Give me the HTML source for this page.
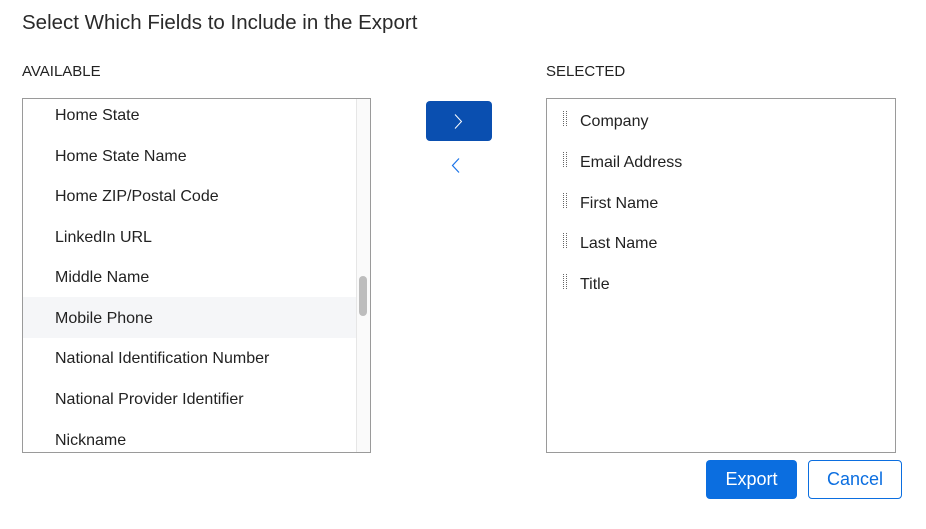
<!DOCTYPE html>
<html><head><style>
body{margin:0;width:926px;height:529px;background:#fff;font-family:"Liberation Sans",sans-serif;color:#222;position:relative;overflow:hidden}
.a{position:absolute}
.t{left:22px;top:11px;font-size:20.5px;color:#2a2a2a}
.lbl{font-size:15px;color:#222}
.box{border:1px solid #9a9a9a;box-sizing:border-box}
.it{position:absolute;font-size:16px;line-height:20px;color:#222}
.btn{border-radius:4px;font-size:18px;text-align:center;box-sizing:border-box}
</style></head><body>
<div class="a t">Select Which Fields to Include in the Export</div>
<div class="a lbl" style="left:22px;top:63px">AVAILABLE</div>
<div class="a lbl" style="left:546px;top:63px">SELECTED</div>
<div class="a box" style="left:22px;top:98px;width:349px;height:355px;overflow:hidden">
 <div class="a" style="left:0;top:198px;width:333px;height:41px;background:#f5f6f8"></div>
 <div class="a" style="left:333px;top:0;width:15px;height:355px;background:#fafafa;border-left:1px solid #e6e6e6"></div>
 <div class="a" style="left:336px;top:177px;width:8px;height:40px;border-radius:4px;background:#bdbdbd"></div>
 <div class="it" style="left:32px;top:7px">Home State</div>
 <div class="it" style="left:32px;top:48px">Home State Name</div>
 <div class="it" style="left:32px;top:88px">Home ZIP/Postal Code</div>
 <div class="it" style="left:32px;top:129px">LinkedIn URL</div>
 <div class="it" style="left:32px;top:169px">Middle Name</div>
 <div class="it" style="left:32px;top:210px">Mobile Phone</div>
 <div class="it" style="left:32px;top:250px">National Identification Number</div>
 <div class="it" style="left:32px;top:291px">National Provider Identifier</div>
 <div class="it" style="left:32px;top:332px">Nickname</div>
</div>
<div class="a" style="left:426px;top:101px;width:66px;height:40px;border-radius:4px;background:#0a4fb0"></div>
<svg class="a" style="left:453px;top:113px" width="12" height="18"><path d="M2 1.5l6.5 7-6.5 7" fill="none" stroke="#fff" stroke-width="1"/></svg>
<svg class="a" style="left:450px;top:157px" width="12" height="18"><path d="M9 1.5l-6.5 7 6.5 7" fill="none" stroke="#1a73e8" stroke-width="1.2"/></svg>
<svg width="0" height="0" style="position:absolute"><defs><pattern id="g" width="3" height="2" patternUnits="userSpaceOnUse"><rect width="1" height="1" fill="#666"/></pattern></defs></svg>
<div class="a box" style="left:546px;top:98px;width:350px;height:355px">
 <svg class="a" style="left:16px;top:12px" width="6" height="15"><rect width="6" height="15" fill="url(#g)"/></svg><div class="it" style="left:33px;top:13px">Company</div>
 <svg class="a" style="left:16px;top:53px" width="6" height="15"><rect width="6" height="15" fill="url(#g)"/></svg><div class="it" style="left:33px;top:54px">Email Address</div>
 <svg class="a" style="left:16px;top:94px" width="6" height="15"><rect width="6" height="15" fill="url(#g)"/></svg><div class="it" style="left:33px;top:95px">First Name</div>
 <svg class="a" style="left:16px;top:134px" width="6" height="15"><rect width="6" height="15" fill="url(#g)"/></svg><div class="it" style="left:33px;top:135px">Last Name</div>
 <svg class="a" style="left:16px;top:175px" width="6" height="15"><rect width="6" height="15" fill="url(#g)"/></svg><div class="it" style="left:33px;top:176px">Title</div>
</div>
<div class="a btn" style="left:706px;top:460px;width:91px;height:39px;background:#0b6ee0;color:#fff;line-height:39px">Export</div>
<div class="a btn" style="left:808px;top:460px;width:94px;height:39px;border:1px solid #0b6ee0;color:#0b6ee0;line-height:37px">Cancel</div>
</body></html>
